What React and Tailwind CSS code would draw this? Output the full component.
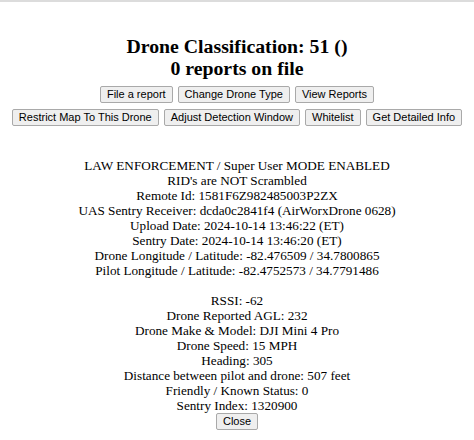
const info = [
  "LAW ENFORCEMENT / Super User MODE ENABLED",
  "RID's are NOT Scrambled",
  "Remote Id: 1581F6Z982485003P2ZX",
  "UAS Sentry Receiver: dcda0c2841f4 (AirWorxDrone 0628)",
  "Upload Date: 2024-10-14 13:46:22 (ET)",
  "Sentry Date: 2024-10-14 13:46:20 (ET)",
  "Drone Longitude / Latitude: -82.476509 / 34.7800865",
  "Pilot Longitude / Latitude: -82.4752573 / 34.7791486",
];

const stats = [
  "RSSI: -62",
  "Drone Reported AGL: 232",
  "Drone Make & Model: DJI Mini 4 Pro",
  "Drone Speed: 15 MPH",
  "Heading: 305",
  "Distance between pilot and drone: 507 feet",
  "Friendly / Known Status: 0",
  "Sentry Index: 1320900",
];

function Btn({ children }) {
  return (
    <button className="h-[17px] px-[6px] bg-[#efefef] border border-[#a9a9a9] rounded-[2px] text-[11px] leading-none text-black font-['Arial','Liberation_Sans',sans-serif] whitespace-nowrap">
      {children}
    </button>
  );
}

export default function App() {
  return (
    <div className="w-[474px] h-[440px] bg-white overflow-hidden font-['Times_New_Roman','Liberation_Serif',serif] text-black">
      <div className="h-[2px] bg-[#dcdcdc]" />

      <div className="pt-[33px] text-center">
        <h2 className="text-[19.8px] leading-[22px] font-bold">
          Drone Classification: 51 ()
          <br />
          0 reports on file
        </h2>

        <div className="mt-[7px] flex justify-center gap-[5px]">
          <Btn>File a report</Btn>
          <Btn>Change Drone Type</Btn>
          <Btn>View Reports</Btn>
        </div>
        <div className="mt-[6px] flex justify-center gap-[5px]">
          <Btn>Restrict Map To This Drone</Btn>
          <Btn>Adjust Detection Window</Btn>
          <Btn>Whitelist</Btn>
          <Btn>Get Detailed Info</Btn>
        </div>

        <div className="mt-[32px] text-[13.2px] leading-[15px]">
          {info.map((line) => (
            <div key={line}>{line}</div>
          ))}
          <div className="h-[15px]" />
          {stats.map((line) => (
            <div key={line}>{line}</div>
          ))}
        </div>

        <div className="flex justify-center">
          <Btn>Close</Btn>
        </div>
      </div>
    </div>
  );
}
